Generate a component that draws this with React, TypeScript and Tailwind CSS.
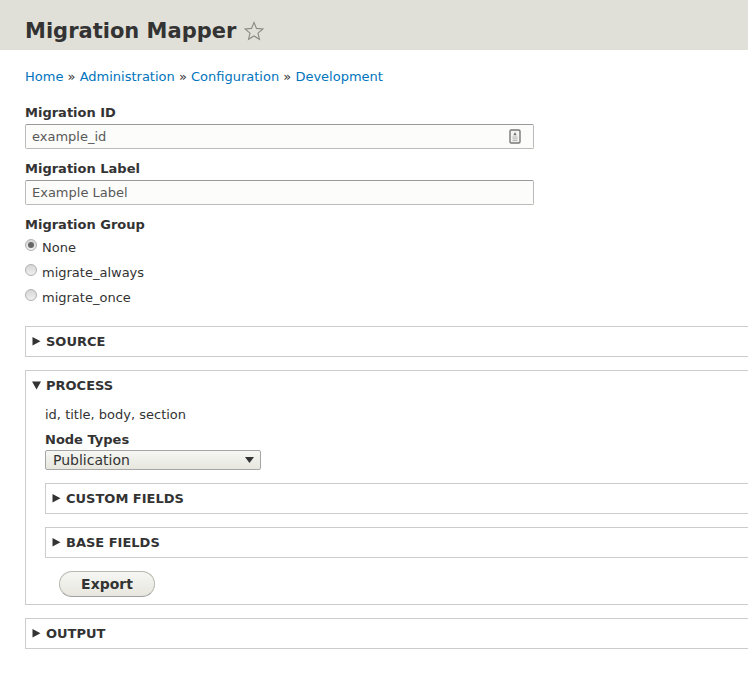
import React from "react";

function Arrow({ open }: { open?: boolean }) {
  return (
    <svg width="9" height="9" viewBox="0 0 9 9" className="shrink-0 text-[#333]">
      {open ? <path d="M0 0.5h9L4.5 8.5z" fill="currentColor" /> : <path d="M0.5 0l8 4.25-8 4.25z" fill="currentColor" />}
    </svg>
  );
}

function Summary({ label, open }: { label: string; open?: boolean }) {
  return (
    <div className="flex h-[29px] items-center pl-[6px]">
      <Arrow open={open} />
      <span className="ml-[5px] text-[13px] font-bold uppercase text-[#333]">{label}</span>
    </div>
  );
}

function Closed({ label, className }: { label: string; className: string }) {
  return (
    <div className={`h-[31px] border border-r-0 border-[#ccc] ${className}`}>
      <Summary label={label} />
    </div>
  );
}

function Field({ label, value, icon }: { label: string; value: string; icon?: boolean }) {
  return (
    <div>
      <div className="h-[21px] text-[13px] font-bold leading-[19px] text-[#333]">{label}</div>
      <div className="flex h-[25px] w-[509px] items-center justify-between rounded-[2px] border border-[#bbb] border-t-[#999] bg-[#fcfcfa] pl-[6px] pr-[12px] text-[13px] text-[#595959]">
        <span>{value}</span>
        {icon && (
          <svg width="12" height="15" viewBox="0 0 12 15">
            <rect x="1" y="1" width="10" height="13" rx="1.2" fill="#f4f4f2" stroke="#777" strokeWidth="1.4" />
            <path d="M6 3l1.7 3.2H4.3z" fill="#777" />
            <path d="M3.5 8h5M3.5 9.8h5M3.5 11.6h5" stroke="#b4b4b4" />
          </svg>
        )}
      </div>
    </div>
  );
}

function Radio({ label, checked }: { label: string; checked?: boolean }) {
  return (
    <div className="flex h-[25px] items-center text-[13px] text-[#333]">
      <span className="mb-[5px] flex h-[12px] w-[12px] items-center justify-center rounded-full border border-[#b0b0b0] bg-gradient-to-b from-[#d6d6d6] to-[#f0f0f0]">
        {checked && <span className="h-[6px] w-[6px] rounded-full bg-[#666]" />}
      </span>
      <span className="ml-[5px]">{label}</span>
    </div>
  );
}

export default function App() {
  return (
    <div className="h-[673px] w-[748px] overflow-hidden bg-white font-['DejaVu_Sans',sans-serif] text-[13px] text-[#333]">
      <div className="flex h-[50px] items-center bg-[#e0e0d8] pl-[25px] pt-[11px]">
        <h1 className="text-[21px] font-bold leading-[38px] text-[#333]">Migration Mapper</h1>
        <svg width="20" height="20" viewBox="0 0 20 20" className="ml-[8px]">
          <path d="M10 1.5l2.5 5.9 6.4.5-4.9 4.2 1.5 6.2L10 15l-5.5 3.3L6 12.1 1.1 7.9l6.4-.5z" fill="none" stroke="#8a8a80" strokeWidth="1.1" />
        </svg>
      </div>

      <div className="w-[800px] pl-[25px]">
        <div className="mt-[17px] h-[19px] leading-[19px] text-[#333]">
          <a className="text-[#0074bd]">Home</a> »{" "}
          <a className="text-[#0074bd]">Administration</a> »{" "}
          <a className="text-[#0074bd]">Configuration</a> »{" "}
          <a className="text-[#0074bd]">Development</a>
        </div>

        <div className="mt-[17px]">
          <Field label="Migration ID" value="example_id" icon />
        </div>
        <div className="mt-[10px]">
          <Field label="Migration Label" value="Example Label" />
        </div>

        <div className="mt-[10px] h-[19px] font-bold leading-[19px]">Migration Group</div>
        <div className="mt-[1px]">
          <Radio label="None" checked />
          <Radio label="migrate_always" />
          <Radio label="migrate_once" />
        </div>

        <Closed label="Source" className="mt-[16px]" />

        <div className="mt-[13px] h-[235px] border border-r-0 border-[#ccc]">
          <Summary label="Process" open />
          <div className="pl-[19px]">
            <div className="mt-[5px] h-[19px] leading-[19px]">id, title, body, section</div>
            <div className="mt-[6px] h-[20px] font-bold leading-[19px]">Node Types</div>
            <div className="flex h-[20px] w-[216px] items-center justify-between rounded-[2px] border border-[#a6a6a6] bg-gradient-to-b from-[#f6f6f3] to-[#e7e7df] pl-[7px] pr-[6px] text-[14px] text-[#333]">
              <span>Publication</span>
              <svg width="9" height="6" viewBox="0 0 9 6">
                <path d="M0 0h9L4.5 6z" fill="#333" />
              </svg>
            </div>
            <Closed label="Custom Fields" className="mt-[13px]" />
            <Closed label="Base Fields" className="mt-[13px]" />
            <div className="ml-[14px] mt-[13px] flex h-[26px] w-[96px] items-center justify-center rounded-[20px] border border-[#b8b8b0] border-b-[#a0a0a0] bg-gradient-to-b from-[#f6f6f3] to-[#e7e7df] text-[14px] font-bold text-[#333]">
              Export
            </div>
          </div>
        </div>

        <Closed label="Output" className="mt-[13px]" />
      </div>
    </div>
  );
}
